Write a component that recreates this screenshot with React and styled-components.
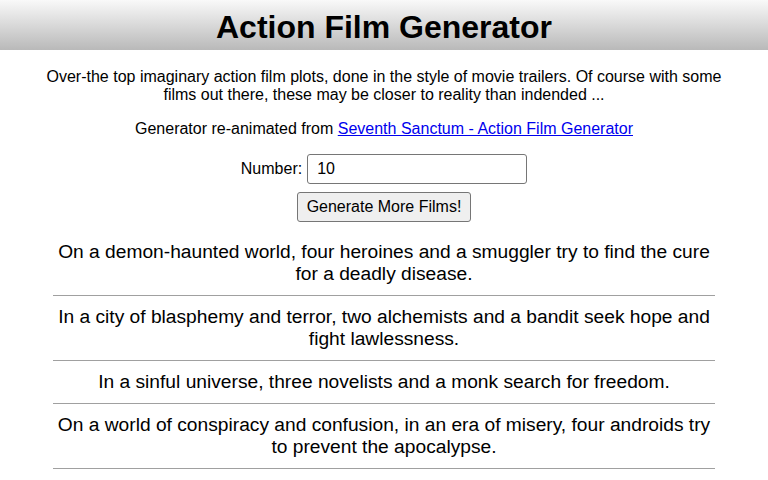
import React, { useState } from 'react'
import styled, { createGlobalStyle } from 'styled-components'

const GlobalStyle = createGlobalStyle`
    html, body {
        margin: 0;
        padding: 0;
        background: #fff;
    }
    body {
        font-family: "Liberation Sans", Arial, sans-serif;
        font-size: 16px;
        color: #000;
    }
`

const Header = styled.header`
    box-sizing: border-box;
    height: 50px;
    padding-top: 3px;
    display: flex;
    align-items: center;
    justify-content: center;
    background: linear-gradient(to bottom, #f9f9f9, #b9b9b9);
`

const Title = styled.h1`
    margin: 0;
    font-size: 32px;
    font-weight: bold;
    line-height: 1;
`

const Main = styled.main`
    display: flex;
    flex-direction: column;
    align-items: center;
    padding-top: 18px;
`

const Intro = styled.p`
    margin: 0 0 16px;
    max-width: 700px;
    text-align: center;
    line-height: 18px;
`

const Link = styled.a`
    color: #0000ee;
    text-decoration: underline;
`

const Form = styled.form`
    display: flex;
    flex-direction: column;
    align-items: center;
    gap: 8px;
    margin-bottom: 9px;
`

const Field = styled.div`
    display: flex;
    align-items: center;
    gap: 5px;
`

const Input = styled.input`
    box-sizing: border-box;
    width: 220px;
    height: 30px;
    padding: 0 9px;
    font-family: inherit;
    font-size: 16px;
    border: 1px solid #767676;
    border-radius: 3px;
`

const Button = styled.button`
    box-sizing: border-box;
    height: 30px;
    padding: 0 9px;
    font-family: inherit;
    font-size: 16px;
    background: #efefef;
    border: 1px solid #767676;
    border-radius: 3px;
    color: #000;
`

const FilmList = styled.ul`
    list-style: none;
    margin: 0;
    padding: 0;
    width: 662px;
`

const Film = styled.li`
    padding: 10px 0;
    border-bottom: 1px solid #a0a0a0;
    text-align: center;
    font-size: 19.2px;
    line-height: 22px;
`

const films = [
    'On a demon-haunted world, four heroines and a smuggler try to find the cure for a deadly disease.',
    'In a city of blasphemy and terror, two alchemists and a bandit seek hope and fight lawlessness.',
    'In a sinful universe, three novelists and a monk search for freedom.',
    'On a world of conspiracy and confusion, in an era of misery, four androids try to prevent the apocalypse.',
]

const App = () => {
    const [number, setNumber] = useState('10')

    return (
        <>
            <GlobalStyle />
            <Header>
                <Title>Action Film Generator</Title>
            </Header>
            <Main>
                <Intro>
                    Over-the top imaginary action film plots, done in the style of movie trailers. Of course with some
                    films out there, these may be closer to reality than indended ...
                </Intro>
                <Intro>
                    Generator re-animated from <Link href="#">Seventh Sanctum - Action Film Generator</Link>
                </Intro>
                <Form onSubmit={e => e.preventDefault()}>
                    <Field>
                        <label htmlFor="number">Number:</label>
                        <Input id="number" value={number} onChange={e => setNumber(e.target.value)} />
                    </Field>
                    <Button type="submit">Generate More Films!</Button>
                </Form>
                <FilmList>
                    {films.map((f, i) => <Film key={i}>{f}</Film>)}
                </FilmList>
            </Main>
        </>
    )
}

export default App
